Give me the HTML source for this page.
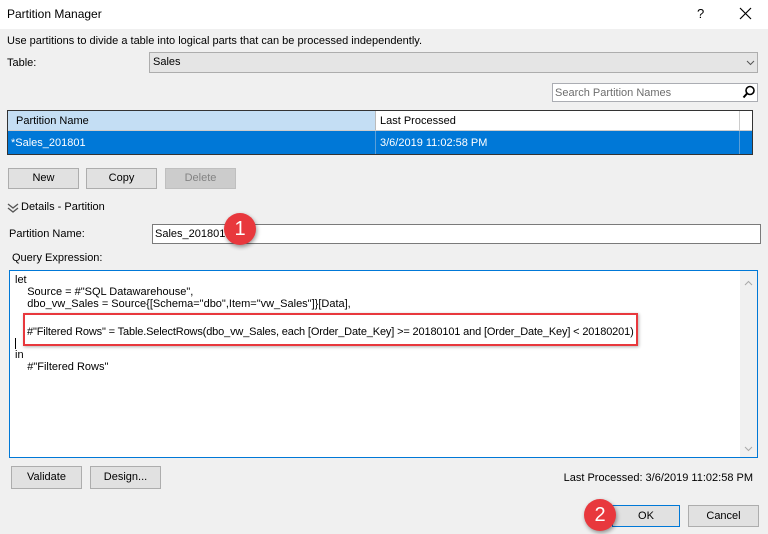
<!DOCTYPE html>
<html><head><meta charset="utf-8"><style>
*{margin:0;padding:0;box-sizing:border-box}
body{width:768px;height:534px;background:#f0f0f0;font-family:"Liberation Sans",sans-serif;font-size:11px;color:#000;position:relative;overflow:hidden}
.a{position:absolute;white-space:nowrap}
.btn{position:absolute;background:#e1e1e1;border:1px solid #adadad;text-align:center;line-height:18px}
.badge{position:absolute;width:32px;height:32px;border-radius:50%;background:#e8383d;color:#fff;font-size:20px;text-align:center;line-height:32px;box-shadow:1px 2px 4px rgba(0,0,0,.4)}
</style></head><body>
<div class="a" style="left:0;top:0;width:768px;height:29px;background:#fff"></div>
<div class="a" style="left:7px;top:7px;font-size:12px">Partition Manager</div>
<div class="a" style="left:697px;top:6px;font-size:13px">?</div>
<svg class="a" style="left:739px;top:7px" width="13" height="13"><path d="M1 1L12 12M12 1L1 12" stroke="#000" stroke-width="1.2"/></svg>
<div class="a" style="left:7px;top:35px">Use partitions to divide a table into logical parts that can be processed independently.</div>
<div class="a" style="left:7px;top:57px">Table:</div>
<div class="a" style="left:149px;top:52px;width:609px;height:21px;background:#e5e5e5;border:1px solid #adadad"></div>
<div class="a" style="left:153px;top:56px">Sales</div>
<svg class="a" style="left:746px;top:60px" width="9" height="6"><path d="M1 1l3.5 3.5L8 1" fill="none" stroke="#555"/></svg>
<div class="a" style="left:552px;top:83px;width:206px;height:19px;background:#fff;border:1px solid #abadb3"></div>
<div class="a" style="left:555px;top:87px;color:#6d6d6d">Search Partition Names</div>
<svg class="a" style="left:742px;top:85px" width="14" height="14"><circle cx="8" cy="5.5" r="4" fill="none" stroke="#000" stroke-width="1.6"/><line x1="5" y1="8.5" x2="1.5" y2="12.5" stroke="#000" stroke-width="2"/></svg>
<div class="a" style="left:7px;top:110px;width:746px;height:45px;background:#fff;border:1px solid #333"></div>
<div class="a" style="left:8px;top:111px;width:367px;height:19px;background:#c4def4"></div>
<div class="a" style="left:375px;top:111px;width:1px;height:43px;background:#bbb"></div>
<div class="a" style="left:739px;top:111px;width:1px;height:43px;background:#ccc"></div>
<div class="a" style="left:8px;top:130px;width:744px;height:1px;background:#ccc"></div>
<div class="a" style="left:8px;top:131px;width:744px;height:23px;background:#0078d7"></div>
<div class="a" style="left:375px;top:131px;width:1px;height:23px;background:#5a9fd8"></div>
<div class="a" style="left:739px;top:131px;width:1px;height:23px;background:#5a9fd8"></div>
<div class="a" style="left:16px;top:115px">Partition Name</div>
<div class="a" style="left:380px;top:115px">Last Processed</div>
<div class="a" style="left:11px;top:137px;color:#fff">*Sales_201801</div>
<div class="a" style="left:380px;top:137px;color:#fff">3/6/2019 11:02:58 PM</div>
<div class="btn" style="left:8px;top:168px;width:71px;height:21px">New</div>
<div class="btn" style="left:86px;top:168px;width:71px;height:21px">Copy</div>
<div class="btn" style="left:165px;top:168px;width:71px;height:21px;background:#ccc;border-color:#bfbfbf;color:#838383">Delete</div>
<svg class="a" style="left:7px;top:202px" width="12" height="12"><path d="M1 2l5 4 5-4M1 6l5 4 5-4" fill="none" stroke="#555" stroke-width="1.3"/></svg>
<div class="a" style="left:21px;top:201px">Details - Partition</div>
<div class="a" style="left:9px;top:228px">Partition Name:</div>
<div class="a" style="left:152px;top:224px;width:609px;height:20px;background:#fff;border:1px solid #7a7a7a"></div>
<div class="a" style="left:155px;top:228px">Sales_201801</div>
<div class="badge" style="left:224px;top:213px">1</div>
<div class="a" style="left:12px;top:252px">Query Expression:</div>
<div class="a" style="left:9px;top:270px;width:749px;height:188px;background:#fff;border:1px solid #0078d7"></div>
<div class="a" style="left:740px;top:271px;width:17px;height:186px;background:#f0f0f0"></div>
<svg class="a" style="left:744px;top:280px" width="9" height="6"><path d="M1 5l3.5-3.5L8 5" fill="none" stroke="#aaa"/></svg>
<svg class="a" style="left:744px;top:446px" width="9" height="6"><path d="M1 1l3.5 3.5L8 1" fill="none" stroke="#aaa"/></svg>
<div class="a" style="left:15px;top:274px;line-height:12px">let<br>&nbsp;&nbsp;&nbsp;&nbsp;Source = #"SQL Datawarehouse",<br>&nbsp;&nbsp;&nbsp;&nbsp;dbo_vw_Sales = Source{[Schema="dbo",Item="vw_Sales"]}[Data],</div>
<div class="a" style="left:27px;top:326px;letter-spacing:-0.15px">#"Filtered Rows" = Table.SelectRows(dbo_vw_Sales, each [Order_Date_Key] &gt;= 20180101 and [Order_Date_Key] &lt; 20180201)</div>
<div class="a" style="left:15px;top:338px;width:1px;height:11px;background:#000"></div>
<div class="a" style="left:15px;top:349px;line-height:12px">in<br>&nbsp;&nbsp;&nbsp;&nbsp;#"Filtered Rows"</div>
<div class="a" style="left:23px;top:313px;width:615px;height:33px;border:2px solid #e8383d;box-shadow:1px 1px 3px rgba(0,0,0,.3)"></div>
<div class="btn" style="left:11px;top:466px;width:71px;height:23px;line-height:21px">Validate</div>
<div class="btn" style="left:90px;top:466px;width:71px;height:23px;line-height:21px">Design...</div>
<div class="a" style="right:15px;top:472px">Last Processed: 3/6/2019 11:02:58 PM</div>
<div class="btn" style="left:612px;top:505px;width:68px;height:22px;line-height:20px;border:1px solid #0078d7">OK</div>
<div class="btn" style="left:688px;top:505px;width:71px;height:22px;line-height:20px">Cancel</div>
<div class="badge" style="left:584px;top:499px">2</div>
</body></html>
